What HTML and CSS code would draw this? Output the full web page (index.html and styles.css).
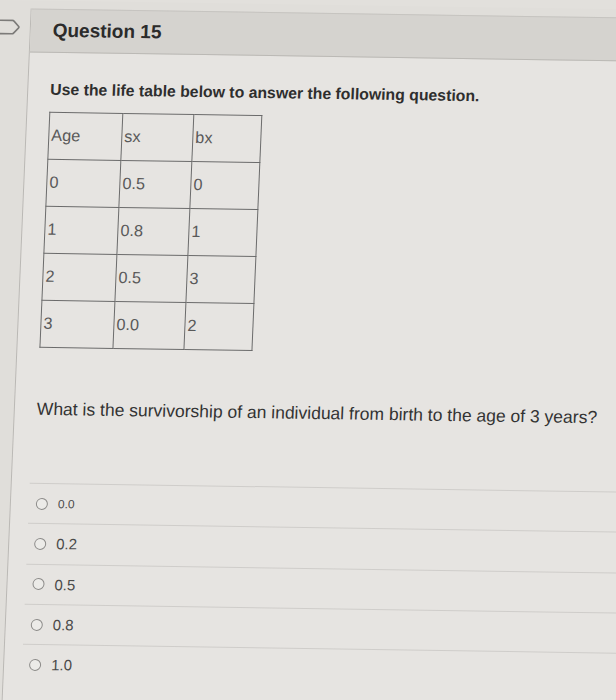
FILE: index.html
```html
<!DOCTYPE html>
<html lang="en">
<head>
<meta charset="utf-8">
<title>Question 15</title>
<link rel="stylesheet" href="styles.css">
</head>
<body>
<div class="screen">
  <div class="gutter">
    <svg class="flag" width="22" height="16" viewBox="0 0 22 16" aria-hidden="true">
      <path d="M-2 1.2 H13.5 Q14.3 1.2 14.9 1.9 L19.8 7.2 Q20.3 7.9 19.8 8.6 L14.9 13.9 Q14.3 14.6 13.5 14.6 H-2" fill="none" stroke="#7c7b79" stroke-width="1.6" stroke-linejoin="round"/>
    </svg>
  </div>
  <div class="card">
    <div class="card-header">Question 15</div>
    <div class="card-body">
      <p class="intro">Use the life table below to answer the following question.</p>
      <table class="life">
        <colgroup><col class="c1"><col class="c2"><col class="c3"></colgroup>
        <tr><td>Age</td><td>sx</td><td>bx</td></tr>
        <tr><td>0</td><td>0.5</td><td>0</td></tr>
        <tr><td>1</td><td>0.8</td><td>1</td></tr>
        <tr><td>2</td><td>0.5</td><td>3</td></tr>
        <tr><td>3</td><td>0.0</td><td>2</td></tr>
      </table>
      <p class="question">What is the survivorship of an individual from birth to the age of 3 years?</p>
      <div class="options">
        <label class="option"><span class="radio"></span><span class="small">0.0</span></label>
        <label class="option"><span class="radio"></span><span>0.2</span></label>
        <label class="option"><span class="radio"></span><span>0.5</span></label>
        <label class="option"><span class="radio"></span><span>0.8</span></label>
        <label class="option"><span class="radio"></span><span>1.0</span></label>
      </div>
    </div>
  </div>
</div>
</body>
</html>
```
FILE: styles.css
```css
html, body {
  margin: 0;
  padding: 0;
  background: #e2e0dc;
  overflow: hidden;
}
body {
  width: 616px;
  height: 700px;
  font-family: "Liberation Sans", Arial, sans-serif;
}
.screen {
  width: 680px;
  height: 780px;
  display: flex;
  padding-top: 8px;
  box-sizing: border-box;
  transform-origin: 0 0;
  transform: matrix(1, 0.015, -0.042, 1, 0, 0);
  background: #e0deda;
}
.gutter {
  width: 31px;
  flex: none;
  padding-top: 11px;
}
.flag {
  display: block;
}
.card {
  flex: 1;
  border-left: 1px solid #bab8b4;
  background: #e6e4e1;
}
.card-header {
  height: 42px;
  background: #d5d3cf;
  border-top: 1px solid #c6c4c0;
  border-bottom: 1px solid #bbb9b5;
  display: flex;
  align-items: center;
  padding-left: 22px;
  font-weight: bold;
  font-size: 19px;
  color: #2b2b2b;
}
.card-body {
  padding-left: 22px;
}
.intro {
  margin: 28px 0 0;
  font-weight: bold;
  font-size: 15.8px;
  line-height: 18px;
  color: #2e2e2e;
}
.life {
  margin-top: 13px;
  border-collapse: collapse;
  border: 1px solid #6b6b6b;
  table-layout: fixed;
}
.life .c1 { width: 73px; }
.life .c2 { width: 71px; }
.life .c3 { width: 68px; }
.life td {
  border: 1px solid #6b6b6b;
  height: 33px;
  padding: 13px 2px 0;
  vertical-align: top;
  font-size: 16.3px;
  line-height: 18px;
  color: #595959;
  box-sizing: content-box;
}
.question {
  margin: 50px 0 0;
  font-size: 17.5px;
  line-height: 22px;
  color: #333;
}
.options {
  margin: 63px 0 0 -4px;
}
.option {
  height: 40.3px;
  box-sizing: border-box;
  border-top: 1px solid #cfcdca;
  display: flex;
  align-items: center;
  padding-left: 6.5px;
  font-size: 15px;
  color: #4a4a4a;
}
.radio {
  width: 12px;
  height: 12px;
  box-sizing: border-box;
  border: 1.4px solid #8c8b89;
  border-radius: 50%;
  background: #ecebe8;
  margin-right: 10.5px;
  flex: none;
}
.small {
  font-size: 12px;
}
```
